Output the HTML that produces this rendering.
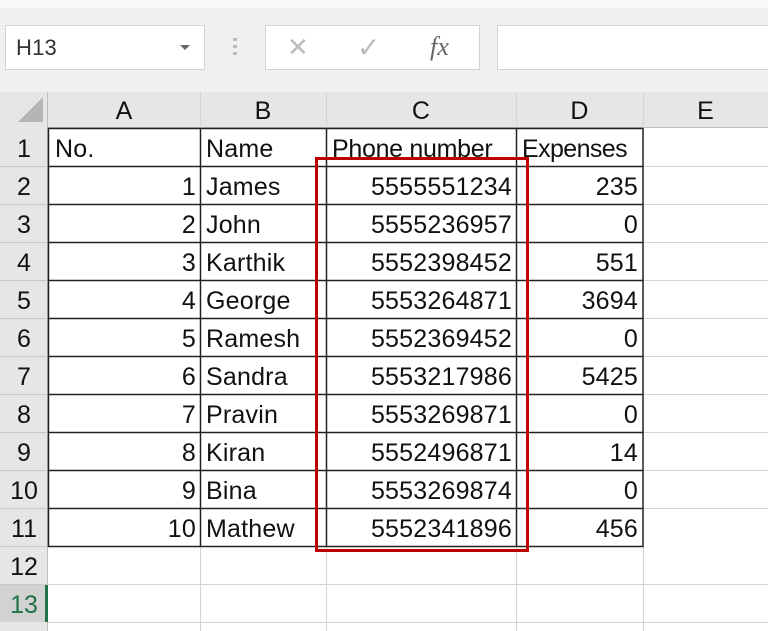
<!DOCTYPE html><html><head><style>
body{margin:0;width:768px;height:631px;overflow:hidden;background:#fff;font-family:"Liberation Sans",Arial,sans-serif;position:relative}
.a{position:absolute;box-sizing:border-box}
.t{font-size:25px;color:#111;line-height:38px;white-space:nowrap;letter-spacing:0.2px}
</style></head><body>
<div class="a" style="left:0;top:0;width:768px;height:92px;background:#f0f0f0"></div>
<div class="a" style="left:0;top:0;width:768px;height:8px;background:#f8f8f8"></div>
<div class="a" style="left:5px;top:25px;width:200px;height:45px;background:#fff;border:1px solid #d4d4d4"></div>
<div class="a t" style="left:16px;top:29px;font-size:22px;color:#333">H13</div>
<div class="a" style="left:180px;top:45px;width:0;height:0;border-left:5px solid transparent;border-right:5px solid transparent;border-top:5px solid #666"></div>
<div class="a" style="left:233px;top:38px;width:4px;height:20px;background:repeating-linear-gradient(#bbb 0 3px,transparent 3px 7px)"></div>
<div class="a" style="left:265px;top:25px;width:215px;height:45px;background:#fff;border:1px solid #d4d4d4"></div>
<div class="a t" style="left:287px;top:28px;font-size:26px;color:#bbb">✕</div>
<div class="a t" style="left:357px;top:29px;font-size:28px;color:#bbb">✓</div>
<div class="a t" style="left:430px;top:28px;font-size:26px;color:#666;font-family:'Liberation Serif',serif;font-style:italic">fx</div>
<div class="a" style="left:497px;top:25px;width:280px;height:45px;background:#fff;border:1px solid #d4d4d4"></div>
<div class="a" style="left:0;top:92px;width:768px;height:36px;background:#e6e6e6;border-bottom:1px solid #bdbdbd"></div>
<div class="a" style="left:0;top:92px;width:48px;height:539px;background:#e6e6e6;border-right:1px solid #bdbdbd"></div>
<div class="a" style="left:18px;top:97px;width:0;height:0;border-left:25px solid transparent;border-bottom:25px solid #b5b5b5"></div>
<div class="a" style="left:0;top:584px;width:48px;height:38px;background:#d2d2d2;border-right:3px solid #217346"></div>
<svg class="a" style="left:0;top:0" width="768" height="631">
<g stroke="#d4d4d4" stroke-width="1">
<line x1="48" y1="584.5" x2="768" y2="584.5"/><line x1="48" y1="622.5" x2="768" y2="622.5"/><line x1="643" y1="166.5" x2="768" y2="166.5"/>
<line x1="643" y1="204.5" x2="768" y2="204.5"/><line x1="643" y1="242.5" x2="768" y2="242.5"/><line x1="643" y1="280.5" x2="768" y2="280.5"/><line x1="643" y1="318.5" x2="768" y2="318.5"/><line x1="643" y1="356.5" x2="768" y2="356.5"/><line x1="643" y1="394.5" x2="768" y2="394.5"/><line x1="643" y1="432.5" x2="768" y2="432.5"/><line x1="643" y1="470.5" x2="768" y2="470.5"/><line x1="643" y1="508.5" x2="768" y2="508.5"/>
<line x1="200.5" y1="546" x2="200.5" y2="631"/><line x1="326.5" y1="546" x2="326.5" y2="631"/><line x1="516.5" y1="546" x2="516.5" y2="631"/><line x1="643.5" y1="546" x2="643.5" y2="631"/>
<line x1="200.5" y1="92" x2="200.5" y2="128"/><line x1="326.5" y1="92" x2="326.5" y2="128"/><line x1="516.5" y1="92" x2="516.5" y2="128"/><line x1="643.5" y1="92" x2="643.5" y2="128"/>
<line x1="0" y1="166.5" x2="48" y2="166.5" stroke="#c8c8c8"/><line x1="0" y1="204.5" x2="48" y2="204.5" stroke="#c8c8c8"/><line x1="0" y1="242.5" x2="48" y2="242.5" stroke="#c8c8c8"/><line x1="0" y1="280.5" x2="48" y2="280.5" stroke="#c8c8c8"/><line x1="0" y1="318.5" x2="48" y2="318.5" stroke="#c8c8c8"/><line x1="0" y1="356.5" x2="48" y2="356.5" stroke="#c8c8c8"/><line x1="0" y1="394.5" x2="48" y2="394.5" stroke="#c8c8c8"/><line x1="0" y1="432.5" x2="48" y2="432.5" stroke="#c8c8c8"/><line x1="0" y1="470.5" x2="48" y2="470.5" stroke="#c8c8c8"/><line x1="0" y1="508.5" x2="48" y2="508.5" stroke="#c8c8c8"/><line x1="0" y1="546.5" x2="48" y2="546.5" stroke="#c8c8c8"/><line x1="0" y1="584.5" x2="48" y2="584.5" stroke="#c8c8c8"/>
</g>
<g stroke="#222" stroke-width="1.5" fill="none">
<rect x="48.5" y="128.5" width="594.5" height="418"/>
<line x1="48" y1="166.5" x2="643" y2="166.5"/><line x1="48" y1="204.5" x2="643" y2="204.5"/><line x1="48" y1="242.5" x2="643" y2="242.5"/><line x1="48" y1="280.5" x2="643" y2="280.5"/><line x1="48" y1="318.5" x2="643" y2="318.5"/><line x1="48" y1="356.5" x2="643" y2="356.5"/><line x1="48" y1="394.5" x2="643" y2="394.5"/><line x1="48" y1="432.5" x2="643" y2="432.5"/><line x1="48" y1="470.5" x2="643" y2="470.5"/><line x1="48" y1="508.5" x2="643" y2="508.5"/>
<line x1="200.5" y1="128" x2="200.5" y2="546"/><line x1="326.5" y1="128" x2="326.5" y2="546"/><line x1="516.5" y1="128" x2="516.5" y2="546"/>
</g>
<rect x="316.5" y="158.5" width="211" height="392" fill="none" stroke="#c00000" stroke-width="3"/>
</svg>
<div class="a t" style="left:0;top:93px;width:768px;height:36px;line-height:36px;font-size:25px">
<span class="a" style="left:48px;width:152px;text-align:center">A</span><span class="a" style="left:200px;width:126px;text-align:center">B</span><span class="a" style="left:326px;width:190px;text-align:center">C</span><span class="a" style="left:516px;width:127px;text-align:center">D</span><span class="a" style="left:643px;width:125px;text-align:center">E</span></div>
<div class="a t" style="left:0;top:130px;width:48px;text-align:center;font-size:25px;line-height:38px;letter-spacing:0">1<br>2<br>3<br>4<br>5<br>6<br>7<br>8<br>9<br>10<br>11<br>12<br><span style="color:#217346">13</span></div>
<div class="a t" style="left:55px;top:130px">No.</div>
<div class="a t" style="left:206px;top:130px">Name</div>
<div class="a t" style="left:332px;top:130px;letter-spacing:-0.3px">Phone number</div>
<div class="a t" style="left:522px;top:130px;letter-spacing:-0.6px">Expenses</div>
<div class="a t" style="left:48px;top:168px;width:148px;text-align:right">1<br>2<br>3<br>4<br>5<br>6<br>7<br>8<br>9<br>10</div>
<div class="a t" style="left:206px;top:168px">James<br>John<br>Karthik<br>George<br>Ramesh<br>Sandra<br>Pravin<br>Kiran<br>Bina<br>Mathew</div>
<div class="a t" style="left:326px;top:168px;width:186px;text-align:right">5555551234<br>5555236957<br>5552398452<br>5553264871<br>5552369452<br>5553217986<br>5553269871<br>5552496871<br>5553269874<br>5552341896</div>
<div class="a t" style="left:516px;top:168px;width:122px;text-align:right">235<br>0<br>551<br>3694<br>0<br>5425<br>0<br>14<br>0<br>456</div>
</body></html>
